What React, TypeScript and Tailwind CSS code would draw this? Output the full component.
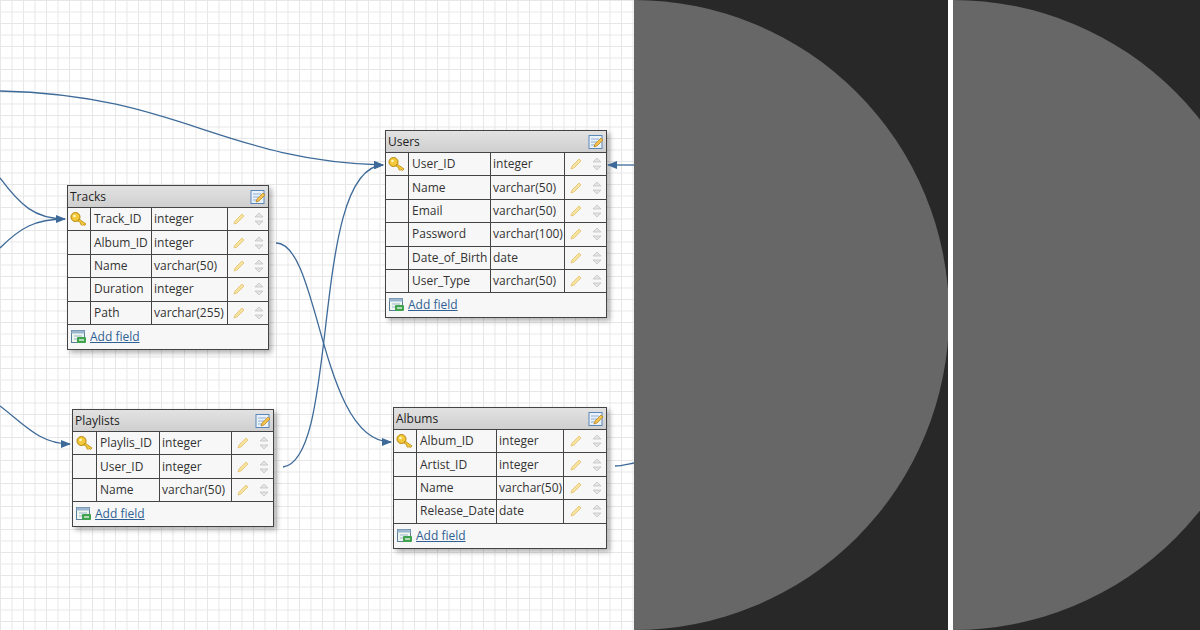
import React from "react";

type Field = [string, string, boolean?];
type T = { name: string; x: number; y: number; w: [number, number, number, number]; fields: Field[] };

const tables: T[] = [
  { name: "Users", x: 385, y: 130, w: [23, 82, 74, 41], fields: [["User_ID", "integer", true], ["Name", "varchar(50)"], ["Email", "varchar(50)"], ["Password", "varchar(100)"], ["Date_of_Birth", "date"], ["User_Type", "varchar(50)"]] },
  { name: "Tracks", x: 67, y: 185, w: [23, 61, 76, 40], fields: [["Track_ID", "integer", true], ["Album_ID", "integer"], ["Name", "varchar(50)"], ["Duration", "integer"], ["Path", "varchar(255)"]] },
  { name: "Playlists", x: 72, y: 409, w: [24, 63, 72, 41], fields: [["Playlis_ID", "integer", true], ["User_ID", "integer"], ["Name", "varchar(50)"]] },
  { name: "Albums", x: 393, y: 407, w: [23, 80, 67, 42], fields: [["Album_ID", "integer", true], ["Artist_ID", "integer"], ["Name", "varchar(50)"], ["Release_Date", "date"]] },
];

const Key = () => (
  <svg width="18" height="16" viewBox="0 0 18 16">
    <circle cx="5.5" cy="6" r="4.5" fill="#f3c93a" stroke="#b8860b" strokeWidth="1" />
    <circle cx="4.5" cy="5" r="1.3" fill="#fff6c8" />
    <path d="M9 8 L16 13 L14.5 14.5 L13 13.5 L12 14.5 L10.5 13 L11 12 L8 10 Z" fill="#f3c93a" stroke="#b8860b" strokeWidth="0.8" />
  </svg>
);
const Pencil = () => (
  <svg width="14" height="14" viewBox="0 0 14 14">
    <path d="M2 12 L3 9 L10 2 L12 4 L5 11 Z" fill="#f7e3a0" stroke="#e2c06a" strokeWidth="0.8" />
  </svg>
);
const Arrows = () => (
  <svg width="10" height="14" viewBox="0 0 10 14">
    <path d="M5 1 L9 5 H1 Z M5 13 L9 9 H1 Z" fill="#e4e4e4" stroke="#bdbdbd" strokeWidth="0.7" />
  </svg>
);
const EditIcon = () => (
  <svg width="16" height="16" viewBox="0 0 16 16">
    <rect x="1" y="1.5" width="13" height="13" fill="#e9f2fb" stroke="#5b88b8" />
    <path d="M3 5 H11 M3 8 H9 M3 11 H7" stroke="#8fb0d3" strokeWidth="1" />
    <path d="M6 13 L7 10 L13 4 L15 6 L9 12 Z" fill="#f2c14e" stroke="#b57f17" strokeWidth="0.7" />
  </svg>
);
const AddIcon = () => (
  <svg width="16" height="14" viewBox="0 0 16 14">
    <rect x="0.5" y="0.5" width="13" height="12" fill="#eef4ee" stroke="#5a7f9c" />
    <rect x="0.5" y="0.5" width="13" height="3" fill="#9bb7cf" />
    <path d="M3 6 H11 M3 9 H11" stroke="#9bb7cf" />
    <rect x="6" y="7" width="9" height="6" rx="1" fill="#3fa34d" />
    <path d="M8 10 H13" stroke="#fff" strokeWidth="1.2" />
  </svg>
);

function Table({ t }: { t: T }) {
  const total = t.w.reduce((a, b) => a + b, 0);
  return (
    <div
      className="absolute border border-[#444] bg-[#f7f7f7] shadow-[3px_3px_5px_rgba(0,0,0,0.3)] text-[12px] text-[#333]"
      style={{ left: t.x, top: t.y, width: total + 2 }}
    >
      <div className="h-[22px] flex items-center justify-between pl-[2px] pr-[2px] bg-gradient-to-b from-[#e2e2e2] to-[#cfcfcf] border-b border-[#444] font-medium text-[#222]">
        <span>{t.name}</span>
        <EditIcon />
      </div>
      {t.fields.map(([n, ty, pk], i) => (
        <div key={i} className="flex h-[23.4px] border-b border-[#444]">
          <div className="flex items-center justify-center border-r border-[#444]" style={{ width: t.w[0] }}>{pk && <Key />}</div>
          <div className="flex items-center pl-[3px] border-r border-[#444] whitespace-nowrap overflow-hidden" style={{ width: t.w[1] }}>{n}</div>
          <div className="flex items-center pl-[2px] border-r border-[#444] whitespace-nowrap overflow-hidden" style={{ width: t.w[2] }}>{ty}</div>
          <div className="flex items-center justify-around" style={{ width: t.w[3] }}><Pencil /><Arrows /></div>
        </div>
      ))}
      <div className="h-[24px] flex items-center gap-[3px] pl-[3px]">
        <AddIcon />
        <span className="text-[#2f5f93] underline">Add field</span>
      </div>
    </div>
  );
}

export default function App() {
  const c = "#3d6a99";
  return (
    <div className="flex w-[1200px] h-[630px] overflow-hidden" style={{ fontFamily: '"Open Sans", "Noto Sans", sans-serif' }}>
      <div
        className="relative w-[634px] h-full bg-white"
        style={{ backgroundImage: "linear-gradient(#e6e6e6 1px, transparent 1px), linear-gradient(90deg, #e6e6e6 1px, transparent 1px)", backgroundSize: "11.5px 11.5px" }}
      >
        {tables.map((t) => <Table key={t.name} t={t} />)}
        <svg className="absolute inset-0" width="634" height="630">
          <defs>
            <marker id="a" markerWidth="10" markerHeight="8" refX="9" refY="4" orient="auto" markerUnits="userSpaceOnUse">
              <path d="M0 0 L10 4 L0 8 Z" fill={c} />
            </marker>
          </defs>
          <g fill="none" stroke={c} strokeWidth="1.3">
            <path d="M0 91 C180 95 220 160 383 165" markerEnd="url(#a)" />
            <path d="M0 178 C20 205 35 219 65 219" markerEnd="url(#a)" />
            <path d="M0 248 C20 228 35 219 65 219" />
            <path d="M276 243 C320 243 320 442 391 442" markerEnd="url(#a)" />
            <path d="M283 467 C340 460 310 168 383 165" markerEnd="url(#a)" />
            <path d="M0 406 C25 425 40 444 70 444" markerEnd="url(#a)" />
            <path d="M634 165 L608 165" markerEnd="url(#a)" />
            <path d="M615 466 C622 466 628 464 634 463" />
          </g>
        </svg>
      </div>
      <div className="relative w-[314px] h-full bg-[#282828] overflow-hidden">
        <div className="absolute w-[630px] h-[630px] rounded-full bg-[#676767] left-[-315px] top-0" />
      </div>
      <div className="w-[5px] h-full bg-white" />
      <div className="relative flex-1 h-full bg-[#282828] overflow-hidden">
        <div className="absolute w-[630px] h-[630px] rounded-full bg-[#676767] left-[-315px] top-0" />
      </div>
    </div>
  );
}
